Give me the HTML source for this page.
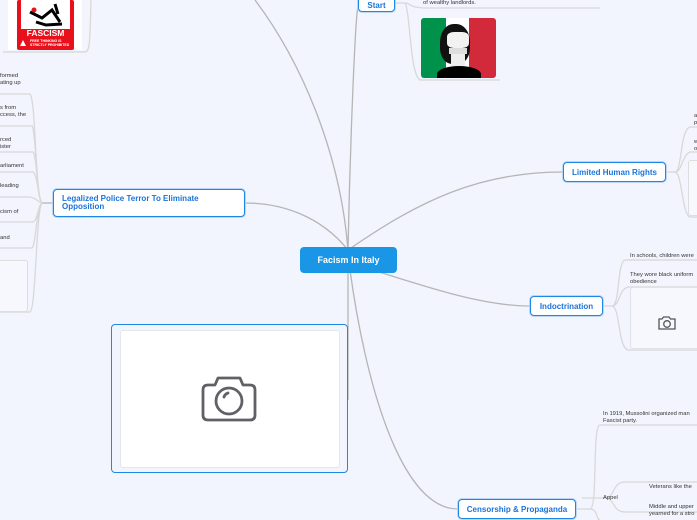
<!DOCTYPE html>
<html><head><meta charset="utf-8"><style>
body{margin:0;width:697px;height:520px;overflow:hidden;background:#f2f5fd;font-family:"Liberation Sans","DejaVu Sans",sans-serif;position:relative}
.n{position:absolute;box-sizing:border-box;background:#fff;border:1.5px solid #1e88e5;border-radius:4px;color:#1a73d9;font-weight:bold;font-size:8px;display:flex;align-items:center;justify-content:center;box-shadow:0 0 0 1px #b9d6f6}
.t{position:absolute;font-size:5.8px;color:#333;line-height:7px;white-space:nowrap}
svg{position:absolute;left:0;top:0}
</style></head><body>
<svg width="697" height="520" fill="none" stroke="#b5b5b5" stroke-width="1.3">
<path d="M348 250 C340 150 300 60 255 0"/>
<path d="M348 250 C350 150 355 20 358 6"/>
<path d="M348 250 C348 300 348 350 348 400"/>
<path d="M348 250 C320 215 280 203 245 203"/>
<path d="M348 250 C420 200 480 172 563 172"/>
<path d="M348 262 C420 285 480 306 530 306"/>
<path d="M350 270 C365 380 400 509 458 509"/>
<path d="M394 3 H405 C410 3 410 8 425 8 H600" stroke="#d8d8d8"/>
<path d="M405 3 C410 10 410 75 420 80 H500" stroke="#d8d8d8"/>
<path d="M3 52 H85 C90 52 90 40 91 0" stroke="#d8d8d8"/>
<path d="M53 203 H42" />
<path d="M42 203 C35 195 36 100 30 94 H0 M42 203 C36 195 36 130 32 126 H0 M42 203 C37 198 37 155 33 152 H0 M42 203 C38 200 38 175 33 172 H0 M42 203 C38 202 36 198 30 197 H0 M42 203 C38 205 38 220 33 222 H0 M42 203 C36 210 36 245 32 248 H0 M42 203 C36 210 36 310 30 312 H0" stroke="#d8d8d8"/>
<path d="M666 172 H675 C682 172 680 130 690 127 H697 M675 172 C682 172 682 155 690 152 H697 M675 172 C682 172 682 215 690 217 H697" stroke="#d8d8d8"/>
<path d="M603 306 H612 C620 306 617 262 625 260 H697 M612 306 C620 306 618 290 628 287 H697 M612 306 C620 306 618 348 628 350 H697" stroke="#d8d8d8"/>
<path d="M576 509 H590 C598 509 592 425 600 425 H697 M582 498 H605 M605 498 C615 498 612 482 625 482 H697 M605 498 C615 498 612 512 625 512 H697 M590 509 C598 509 596 520 600 520" stroke="#d8d8d8"/>
</svg>
<div style="position:absolute;left:8px;top:0;width:74px;height:50px;background:#fff"></div>
<div style="position:absolute;left:17px;top:0;width:57px;height:50px;background:#e8101a;border-radius:2px"></div>
<div style="position:absolute;left:21px;top:0;width:49px;height:29px;background:#fff"></div>
<svg width="697" height="60" style="left:0;top:0"><path d="M30 12 L42 18 L52 10 L60 22 M36 22 L46 25 L62 24 M55 4 L58 14" stroke="#000" stroke-width="3" fill="none"/><circle cx="34" cy="10" r="2.5" fill="#e8101a"/></svg>
<div style="position:absolute;left:19px;top:29px;width:53px;text-align:center;color:#fff;font-weight:bold;font-size:8.5px;line-height:9px">FASCISM</div>
<div style="position:absolute;left:30px;top:39px;color:#fff;font-size:3.5px;line-height:4px;font-weight:bold">FREE THINKING IS<br>STRICTLY PROHIBITED</div>
<div style="position:absolute;left:20px;top:40px;width:0;height:0;border-left:3px solid transparent;border-right:3px solid transparent;border-bottom:6px solid #fff"></div>
<div style="position:absolute;left:421px;top:18px;width:75px;height:60px;border-radius:3px;overflow:hidden;background:linear-gradient(90deg,#00924a 0 33%,#fff 33% 64%,#d32a3b 64%)">
<div style="position:absolute;left:16px;top:48px;width:44px;height:16px;background:#000;border-radius:50% 50% 0 0"></div>
<div style="position:absolute;left:19px;top:6px;width:30px;height:40px;background:#111;border-radius:45% 45% 40% 40%"></div>
<div style="position:absolute;left:26px;top:14px;width:22px;height:16px;background:#f2f2f2;border-radius:30%"></div>
<div style="position:absolute;left:28px;top:30px;width:18px;height:6px;background:#ddd"></div>
<div style="position:absolute;left:30px;top:36px;width:14px;height:12px;background:#eee"></div>
</div>
<div class="t" style="left:423px;top:0">of wealthy landlords.</div>
<div class="t" style="left:0;top:73px">formed<br>ating up</div>
<div class="t" style="left:0;top:105px">s from<br>ccess, the</div>
<div class="t" style="left:0;top:137px">rced<br>ister</div>
<div class="t" style="left:0;top:163px">arliament</div>
<div class="t" style="left:0;top:183px">leading</div>
<div class="t" style="left:0;top:209px">cism of</div>
<div class="t" style="left:0;top:235px">and</div>
<div style="position:absolute;left:-5px;top:260px;width:31px;height:50px;border:1px solid #ddd;border-radius:3px;background:#f6f8fd"></div>
<div class="t" style="left:694px;top:113px">a<br>p</div>
<div class="t" style="left:694px;top:139px">w<br>o</div>
<div style="position:absolute;left:688px;top:160px;width:20px;height:54px;border:1px solid #ddd;border-radius:3px;background:#f6f8fd"></div>
<div class="t" style="left:630px;top:253px">In schools, children were</div>
<div class="t" style="left:630px;top:272px">They wore black uniform<br>obedience</div>
<div style="position:absolute;left:630px;top:287px;width:80px;height:60px;border:1px solid #e0e2e8;border-radius:3px;background:#f6f8fd"></div>
<svg width="697" height="520"><g transform="translate(658,315)" fill="none" stroke="#555" stroke-width="1.3"><path d="M1 4 H4 L5.5 2 H11 L12.5 4 H17 V14 H1 Z"/><circle cx="9" cy="9" r="3.3"/></g></svg>
<div class="t" style="left:603px;top:411px">In 1919, Mussolini organized man<br>Fascist party.</div>
<div class="t" style="left:603px;top:495px">Appel</div>
<div class="t" style="left:649px;top:484px">Veterans like the</div>
<div class="t" style="left:649px;top:504px">Middle and upper<br>yearned for a stro</div>
<div class="n" style="left:358px;top:-8px;width:37px;height:20px;padding-top:6px">Start</div>
<div class="n" style="left:300px;top:247px;width:97px;height:26px;background:#1a96e6;border:none;box-shadow:none;color:#fff;font-size:9px">Facism In Italy</div>
<div class="n" style="left:53px;top:189px;width:192px;height:28px;justify-content:flex-start;padding-left:8px;line-height:8px">Legalized Police Terror To Eliminate<br>Opposition</div>
<div class="n" style="left:563px;top:162px;width:103px;height:20px">Limited Human Rights</div>
<div class="n" style="left:530px;top:296px;width:73px;height:20px">Indoctrination</div>
<div class="n" style="left:458px;top:499px;width:118px;height:20px">Censorship &amp; Propaganda</div>
<div style="position:absolute;left:111px;top:324px;width:237px;height:149px;box-sizing:border-box;border:1.5px solid #1e88e5;border-radius:4px;background:#f2f5fd"></div>
<div style="position:absolute;left:120px;top:330px;width:220px;height:138px;box-sizing:border-box;border:1px solid #e4e6ea;border-radius:3px;background:#fff"></div>
<svg width="697" height="520"><g fill="none" stroke="#5f6166" stroke-width="2.8" stroke-linejoin="round"><path d="M208 385 H215 L218 378 H240 L243 385 H250 Q255 385 255 390 V415 Q255 420 250 420 H208 Q203 420 203 415 V390 Q203 385 208 385 Z"/><circle cx="229" cy="401" r="13"/><path d="M224 397 Q225 394 228 393" stroke-linecap="round"/></g></svg>
</body></html>
